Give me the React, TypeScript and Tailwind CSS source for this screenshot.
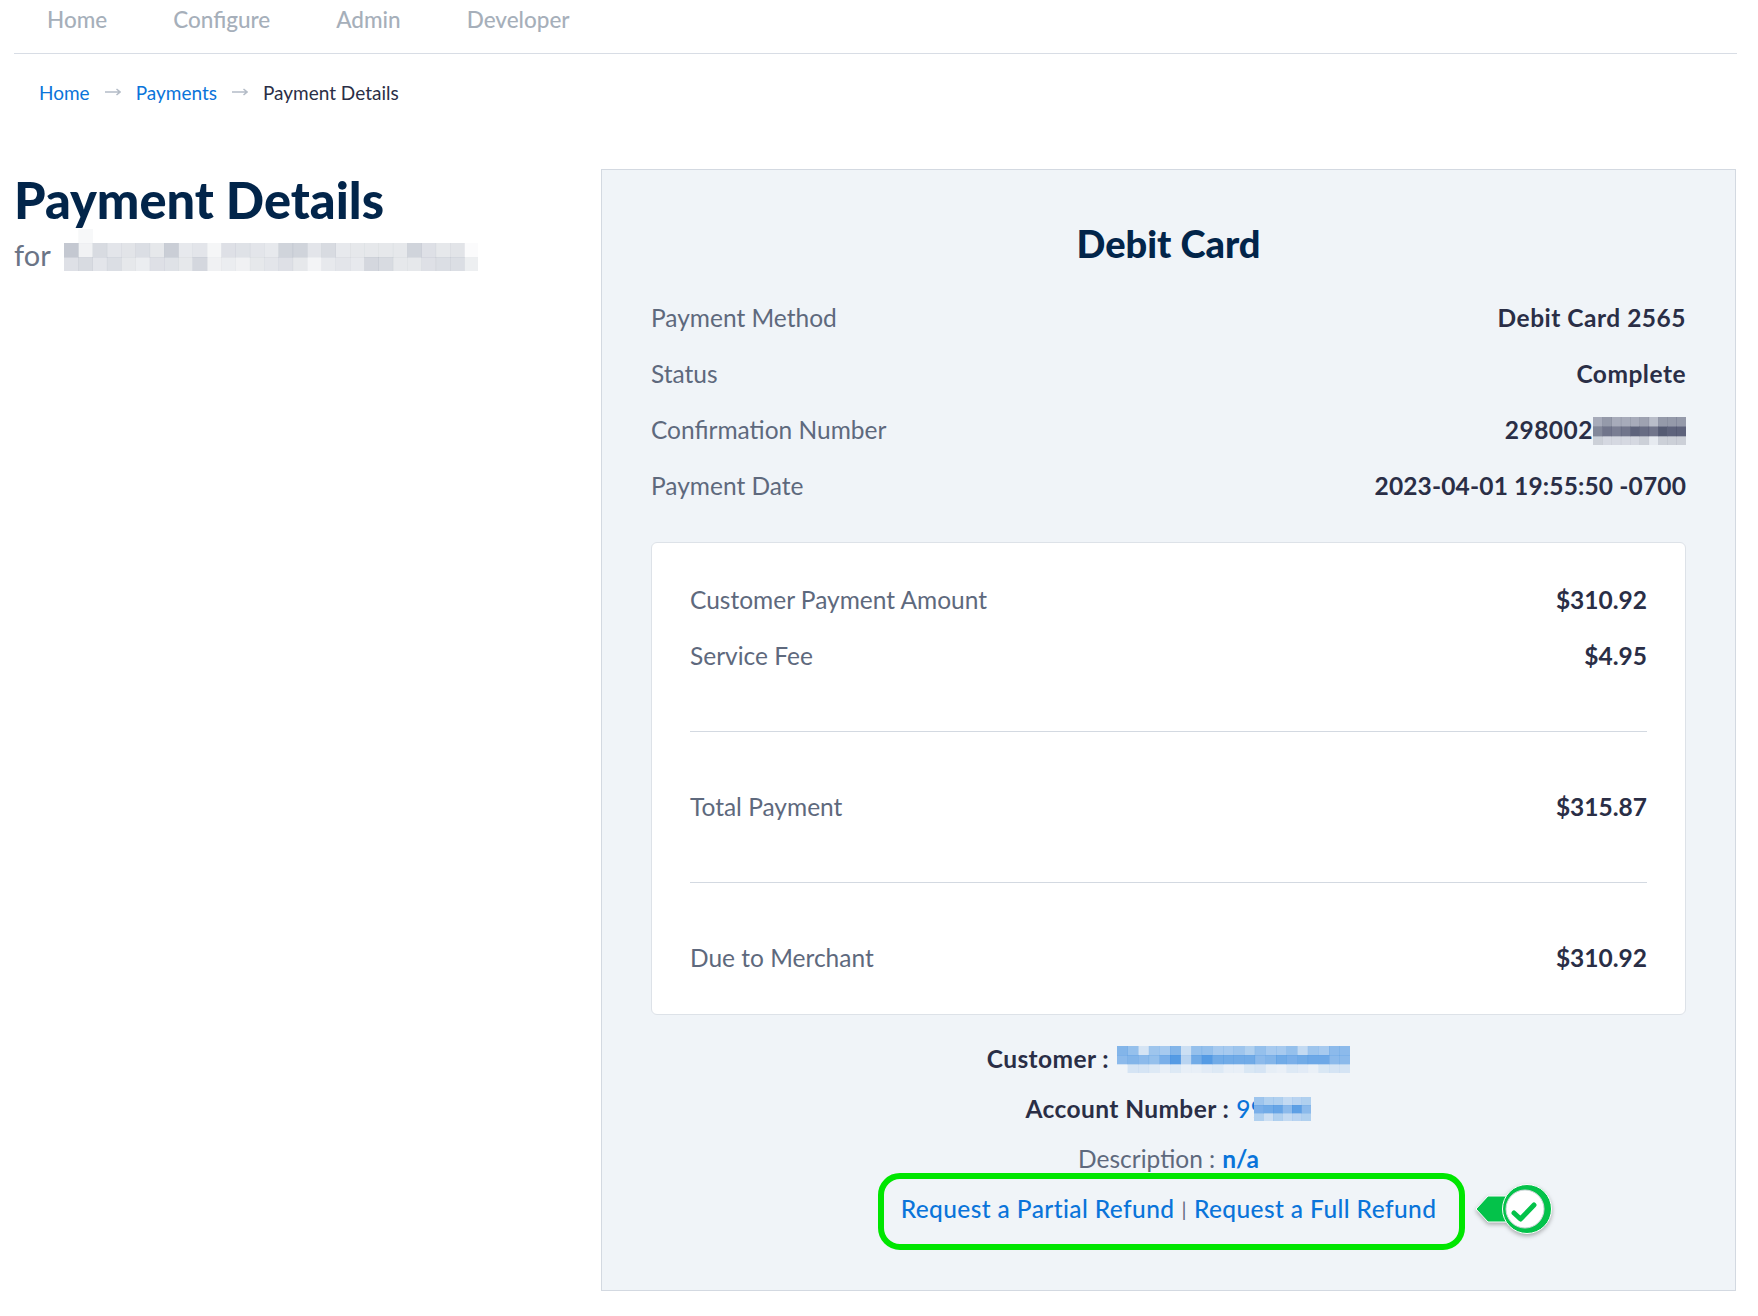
const font = { fontFamily: '"Lato", "Liberation Sans", sans-serif' }

// censored values in the screenshot, each number is how strong one mosaic cell is
function Mosaic({ rows, cell, h, color, className = "" }: { rows: number[][]; cell: number; h: number; color: string; className?: string }) {
  const cols = Math.max(...rows.map((r) => r.length))
  return (
    <svg width={cols * cell} height={rows.length * h} className={`shrink-0 ${className}`}>
      {rows.map((row, y) =>
        row.map((v, x) => <rect key={`${x}-${y}`} x={x * cell} y={y * h} width={cell + 0.3} height={h + 0.3} fill={color} fillOpacity={v} />)
      )}
    </svg>
  )
}

const forRows = [
  [0, 0.04, 0, 0, 0, 0, 0, 0, 0, 0, 0, 0, 0, 0, 0, 0, 0, 0, 0, 0, 0, 0, 0, 0, 0, 0, 0, 0, 0],
  [0.3, 0.07, 0.2, 0.14, 0.15, 0.18, 0.13, 0.27, 0.12, 0.14, 0.05, 0.17, 0.16, 0.14, 0.12, 0.24, 0.24, 0.14, 0.2, 0.12, 0.13, 0.13, 0.13, 0.13, 0.24, 0.17, 0.13, 0.15, 0.02],
  [0.17, 0.2, 0.14, 0.18, 0.13, 0.1, 0.17, 0.16, 0.13, 0.22, 0.08, 0.1, 0.08, 0.13, 0.14, 0.17, 0.13, 0.06, 0.12, 0.14, 0.12, 0.22, 0.2, 0.13, 0.13, 0.17, 0.18, 0.18, 0.09],
]

const customerRows = [
  [0.6, 0.5, 0.15, 0.45, 0.4, 0.6, 0.2, 0.5, 0.5, 0.4, 0.4, 0.45, 0.35, 0.5, 0.4, 0.4, 0.5, 0.25, 0.45, 0.4, 0.55, 0.55],
  [0.55, 0.6, 0.55, 0.5, 0.65, 0.85, 0.3, 0.7, 0.85, 0.7, 0.7, 0.7, 0.7, 0.55, 0.6, 0.7, 0.65, 0.7, 0.72, 0.72, 0.55, 0.55],
  [0, 0.15, 0.15, 0.1, 0.04, 0.1, 0.04, 0.04, 0.08, 0.1, 0.04, 0.04, 0.12, 0.15, 0.05, 0.03, 0.1, 0.08, 0.03, 0.12, 0.15, 0.15],
]

const accountRows = [
  [0.45, 0.35, 0.35, 0.25, 0.3, 0.35],
  [0.65, 0.7, 0.75, 0.55, 0.8, 0.55],
  [0.35, 0.2, 0.35, 0.25, 0.3, 0.35],
]

const confirmRows = [
  [0.4, 0.5, 0.4, 0.4, 0.4, 0.45, 0.3, 0.5, 0.5, 0.5],
  [0.6, 0.7, 0.65, 0.7, 0.8, 0.75, 0.7, 0.85, 0.8, 0.8],
  [0.2, 0.15, 0.15, 0.15, 0.15, 0.2, 0.05, 0.2, 0.2, 0.2],
]

const details = [
  { label: "Payment Method", value: "Debit Card 2565", valueClass: "tracking-[0.5px]" },
  { label: "Status", value: "Complete", valueClass: "tracking-[0.5px]" },
  { label: "Confirmation Number", value: "298002", valueClass: "tracking-[0.5px]", censored: true },
  { label: "Payment Date", value: "2023-04-01 19:55:50 -0700", valueClass: "tracking-[0.15px]" },
]

function Row({ label, value, valueClass = "", censored }: { label: string; value: string; valueClass?: string; censored?: boolean }) {
  return (
    <div className="flex h-[56px] items-center justify-between">
      <span className="text-[#5e697d]">{label}</span>
      <span className={`flex items-center font-bold text-[#2a2e46] ${valueClass}`}>
        {value}
        {censored && <Mosaic rows={confirmRows} cell={9.3} h={9.5} color="#3a3f5c" className="mt-[2px]" />}
      </span>
    </div>
  )
}

function Arrow() {
  return (
    <svg width="16" height="10" viewBox="0 0 16 10" fill="none" stroke="#b4bcc7" strokeWidth="1.5" className="mb-[3px]">
      <path d="M0 5h15M11.5 2l3.5 3-3.5 3" />
    </svg>
  )
}

function CheckBadge() {
  return (
    <svg width="90" height="80" viewBox="0 0 90 80" className="absolute left-[567px] top-[-12px]">
      <g style={{ filter: "drop-shadow(0 2px 2px rgba(0,0,0,0.3))" }}>
        <path d="M8 37L20 24H45V50H20Z" fill="#04c24a" stroke="#fff" strokeWidth="1" />
        <circle cx="59" cy="37" r="24.5" fill="#04c24a" stroke="#fff" strokeWidth="1" />
      </g>
      <circle cx="57" cy="37" r="19" fill="#fff" stroke="#cfd5d9" strokeWidth="1" />
      <path d="M46 41l6.500 6L66 33" fill="none" stroke="#04c24a" strokeWidth="5" strokeLinecap="round" strokeLinejoin="round" />
    </svg>
  )
}

export default function App() {
  return (
    <div className="min-h-[1316px] overflow-hidden bg-white pl-[14px] pr-[21px]" style={font}>
      <nav className="flex h-[54px] items-center gap-[66px] border-b border-[#d8dde5] pb-[14px] pl-[33px] text-[22.5px] font-medium text-[#a6afba]">
        <span>Home</span>
        <span>Configure</span>
        <span>Admin</span>
        <span>Developer</span>
      </nav>

      <div className="flex h-[78px] items-center gap-[15px] pl-[25px] text-[19px]">
        <span className="text-[#0a74da]">Home</span>
        <Arrow />
        <span className="text-[#0a74da]">Payments</span>
        <Arrow />
        <span className="text-[#2a2e46]">Payment Details</span>
      </div>

      <div className="mt-[37px] flex items-start">
        <div className="w-[587px] pt-[3px]">
          <h1 className="text-[50.5px] font-black leading-[56px] text-[#02254a]">Payment Details</h1>
          <div className="mt-[9px] flex items-center text-[29px] text-[#6a7486]">
            <span className="leading-[36px]">for</span>
            <Mosaic rows={forRows} cell={14.3} h={14} color="#3a4a68" className="ml-[13px] mt-[-10px]" />
          </div>
        </div>

        <div className="h-[1122px] w-[1135px] border border-[#d3d9e1] bg-[#f0f4f8] px-[49px] text-[24.5px]">
          <h2 className="mb-[23px] mt-[49px] text-center text-[38px] font-black leading-[48px] text-[#02254a]">Debit Card</h2>
          {details.map((d) => (
            <Row key={d.label} {...d} />
          ))}

          <div className="mt-[28px] rounded-md border border-[#dde2e8] bg-white px-[38px] pb-[28px] pt-[29px]">
            <Row label="Customer Payment Amount" value="$310.92" />
            <Row label="Service Fee" value="$4.95" />
            <div className="mb-[47px] mt-[47px] h-px bg-[#d3d9e1]" />
            <Row label="Total Payment" value="$315.87" />
            <div className="mb-[47px] mt-[47px] h-px bg-[#d3d9e1]" />
            <Row label="Due to Merchant" value="$310.92" />
          </div>

          <div className="mt-[19px] flex flex-col items-center">
            <div className="flex h-[50px] items-center font-bold tracking-[0.4px] text-[#2a2e46]">
              Customer :<Mosaic rows={customerRows} cell={10.6} h={9} color="#3a8be0" className="ml-[8px]" />
            </div>
            <div className="flex h-[50px] items-center font-bold tracking-[0.4px] text-[#2a2e46]">
              Account Number :<span className="ml-[7px] font-medium text-[#0a74da]">99</span>
              <Mosaic rows={accountRows} cell={9.5} h={8} color="#3a8be0" className="ml-[-11px] bg-[#f0f4f8]" />
            </div>
            <div className="flex h-[50px] items-center text-[#5e697d]">
              Description :<span className="ml-[7px] font-bold text-[#0a74da]">n/a</span>
            </div>
            <div className="relative flex h-[50px] items-center whitespace-nowrap tracking-[0.4px] text-[#5e697d]">
              <div className="absolute bottom-[-16px] left-[-23px] right-[-29px] top-[-11px] rounded-[22px] border-[6px] border-[#00e600]" />
              <span className="font-medium text-[#0a74da]">Request a Partial Refund</span>
              <span className="mx-[7px] text-[20px]">|</span>
              <span className="font-medium text-[#0a74da]">Request a Full Refund</span>
              <CheckBadge />
            </div>
          </div>
        </div>
      </div>
    </div>
  )
}
